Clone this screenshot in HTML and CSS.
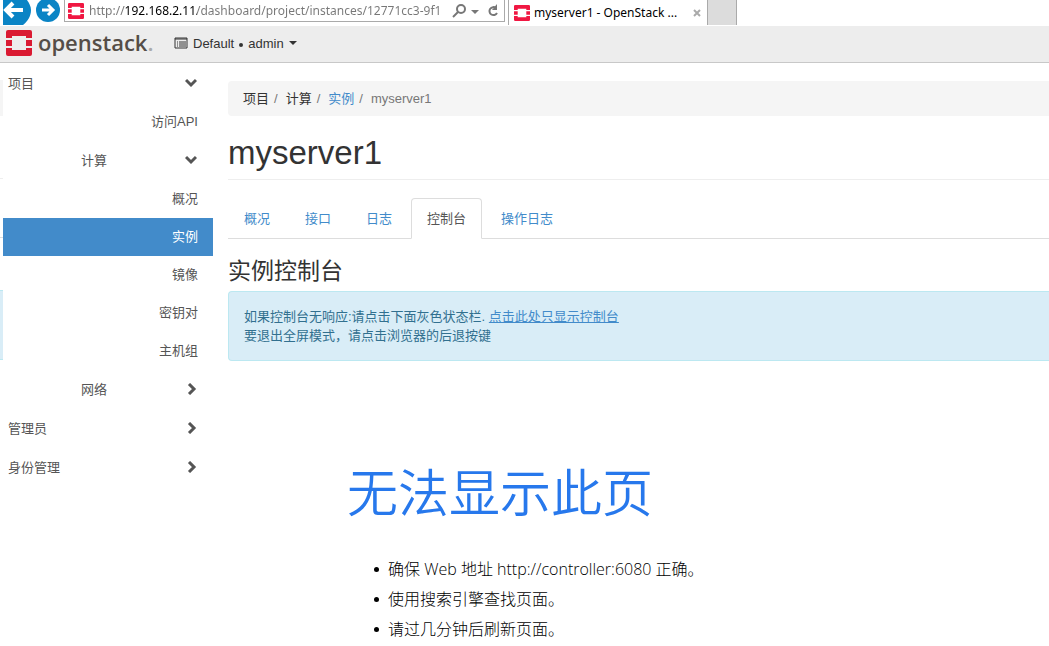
FILE: index.html
```html
<!DOCTYPE html>
<html lang="zh-CN">
<head>
    <meta charset="UTF-8">
    <meta name="viewport" content="width=device-width, initial-scale=1.0">
    <title>myserver1 - OpenStack Dashboard</title>
    <link rel="stylesheet" href="styles.css">
</head>
<body>
    <svg class="sprite" aria-hidden="true">
        <symbol id="mark" viewBox="0 0 26 26">
            <path d="M2 0h22a2 2 0 0 1 2 2v6h-6V6H6v2H0V2a2 2 0 0 1 2-2zM0 10h6v6H0zM20 10h6v6h-6zM0 18h6v2h14v-2h6v6a2 2 0 0 1-2 2H2a2 2 0 0 1-2-2z"/>
        </symbol>
        <symbol id="down" viewBox="0 0 12 12">
            <path d="M1 3l5 5 5-5" fill="none" stroke="currentColor" stroke-width="3"/>
        </symbol>
        <symbol id="right" viewBox="0 0 12 12">
            <path d="M4 1l5 5-5 5" fill="none" stroke="currentColor" stroke-width="3"/>
        </symbol>
    </svg>

    <div class="browser">
        <button class="back" aria-label="后退">
            <svg width="31" height="25" viewBox="0 0 31 25"><path d="M3 0h24c2 3 4 6 4 10 0 6-3 11-8 15H3z" fill="#0a84c5"/><path d="M23 10H6M13 3l-7 7 7 7" fill="none" stroke="#fff" stroke-width="4"/></svg>
        </button>
        <button class="forward" aria-label="前进">
            <svg width="26" height="25" viewBox="0 0 26 25"><circle cx="13" cy="10" r="12" fill="#0a84c5"/><path d="M7 10h11M13 5l5 5-5 5" fill="none" stroke="#fff" stroke-width="3"/></svg>
        </button>
        <div class="address">
            <svg class="favicon"><use href="#mark"/></svg>
            <input class="url" type="text" aria-label="地址" value="http://192.168.2.11/dashboard/project/instances/12771cc3-9f1">
            <button aria-label="搜索">
                <svg width="14" height="16" viewBox="0 0 14 16"><circle cx="9" cy="6" r="4" fill="none" stroke="#777" stroke-width="2"/><path d="M6 9l-5 5" stroke="#777" stroke-width="2"/></svg>
            </button>
            <button aria-label="历史记录">
                <svg width="8" height="16" viewBox="0 0 8 16"><path d="M0 7h8l-4 4z" fill="#777"/></svg>
            </button>
            <button class="refresh" aria-label="刷新">
                <svg width="12" height="16" viewBox="0 0 12 16"><path d="M9 5a4 4 0 1 0 1 5" fill="none" stroke="#777" stroke-width="2"/><path d="M10 1v6H5z" fill="#777"/></svg>
            </button>
        </div>
        <div class="browser-tab">
            <svg class="favicon"><use href="#mark"/></svg>
            <span>myserver1 - OpenStack ...</span>
            <button aria-label="关闭">
                <svg width="8" height="8" viewBox="0 0 8 8"><path d="M1 1l6 6M7 1l-6 6" stroke="#aaa" stroke-width="2"/></svg>
            </button>
        </div>
        <button class="new-tab" aria-label="新建标签页"></button>
    </div>

    <header class="navbar">
        <a class="brand" href="#">
            <svg><use href="#mark"/></svg>
            <span>openstack<small>.</small></span>
        </a>
        <button class="context">
            <svg width="14" height="12" viewBox="0 0 14 12"><path d="M1 1h12v10H1z" fill="none" stroke="#333" stroke-width="1"/><path d="M1 2h12M3 5h1M5 5h7M3 7h1M5 7h7M3 9h1M5 9h7" stroke="#333"/></svg>
            <span>Default</span>
            <i class="dot"></i>
            <span>admin</span>
            <i class="caret"></i>
        </button>
    </header>

    <div class="layout">
        <div class="edge">
            <div class="edge-crumb"></div>
            <div class="edge-title"></div>
            <div class="edge-tabs"></div>
            <div class="edge-alert"></div>
        </div>
        <nav class="sidebar">
            <a class="group" href="#">项目 <svg><use href="#down"/></svg></a>
            <a class="leaf" href="#">访问API</a>
            <a class="group sub" href="#">计算 <svg><use href="#down"/></svg></a>
            <a class="leaf" href="#">概况</a>
            <a class="leaf active" href="#">实例</a>
            <a class="leaf" href="#">镜像</a>
            <a class="leaf" href="#">密钥对</a>
            <a class="leaf" href="#">主机组</a>
            <a class="group sub" href="#">网络 <svg><use href="#right"/></svg></a>
            <a class="group" href="#">管理员 <svg><use href="#right"/></svg></a>
            <a class="group" href="#">身份管理 <svg><use href="#right"/></svg></a>
        </nav>

        <main class="content">
            <ol class="breadcrumb">
                <li>项目</li>
                <li>计算</li>
                <li><a href="#">实例</a></li>
                <li class="current">myserver1</li>
            </ol>
            <h1>myserver1</h1>
            <ul class="tabs">
                <li><a href="#">概况</a></li>
                <li><a href="#">接口</a></li>
                <li><a href="#">日志</a></li>
                <li><a class="active" href="#">控制台</a></li>
                <li><a href="#">操作日志</a></li>
            </ul>
            <h3>实例控制台</h3>
            <p class="alert">如果控制台无响应:请点击下面灰色状态栏. <a href="#">点击此处只显示控制台</a><br>要退出全屏模式，请点击浏览器的后退按键</p>
            <section class="console">
                <h2>无法显示此页</h2>
                <ul>
                    <li>确保 Web 地址 http://controller:6080 正确。</li>
                    <li>使用搜索引擎查找页面。</li>
                    <li>请过几分钟后刷新页面。</li>
                </ul>
            </section>
        </main>
    </div>
</body>
</html>
```
FILE: styles.css
```css
* {
    box-sizing: border-box;
}

body {
    margin: 0;
    background-color: #fff;
    color: #333;
    font-family: "Liberation Sans", "Noto Sans CJK SC", sans-serif;
    font-size: 13px;
    line-height: 19px;
    overflow: hidden;
}

a {
    color: #428bca;
    text-decoration: none;
}

button {
    display: flex;
    align-items: center;
    padding: 0;
    border: none;
    background: none;
    color: inherit;
    font: inherit;
    cursor: pointer;
}

h1, h2, h3, p, ul, ol {
    margin: 0;
    padding: 0;
    font-weight: normal;
}

ul, ol {
    list-style: none;
}

.sprite {
    display: none;
}

/* browser bar */
.browser {
    display: flex;
    height: 26px;
    padding-bottom: 1px;
    font-family: "Noto Sans", "Noto Sans CJK SC", sans-serif;
    font-size: 12px;
}

.forward {
    margin: 0 3px 0 4px;
}

.address {
    display: flex;
    align-items: center;
    gap: 5px;
    width: 441px;
    height: 22px;
    padding: 0 5px 0 3px;
    border: 1px solid #aaa;
    border-top: none;
}

.favicon {
    flex: none;
    width: 16px;
    height: 16px;
    fill: #f01742;
}

.url {
    flex: 1;
    min-width: 0;
    padding: 0;
    border: none;
    outline: none;
    font: inherit;
    color: #777;
    /* host name is darker than the rest of the address */
    background: linear-gradient(to right, #777 36px, #000 36px, #000 108px, #777 108px);
    -webkit-background-clip: text;
    background-clip: text;
    -webkit-text-fill-color: transparent;
}

.refresh {
    margin-left: 3px;
}

.browser-tab {
    display: flex;
    align-items: center;
    gap: 4px;
    width: 200px;
    margin-left: 3px;
    padding: 0 6px 0 5px;
    border: solid #aaa;
    border-width: 0 1px;
    color: #000;
    white-space: nowrap;
}

.browser-tab button {
    margin-left: auto;
}

.new-tab {
    width: 29px;
    border-right: 1px solid #aaa;
    background-color: #dcdcdc;
}

/* top navigation */
.navbar {
    display: flex;
    align-items: center;
    height: 37px;
    padding: 0 6px 2px;
    border-bottom: 1px solid #c8c8c8;
    background-color: #ededed;
}

.brand {
    display: flex;
    align-items: center;
    gap: 6px;
    width: 168px;
    color: #554d47;
    font-family: "Open Sans", sans-serif;
    font-size: 22px;
    font-weight: 600;
    line-height: 26px;
}

.brand svg {
    width: 26px;
    height: 26px;
    fill: #da1a32;
}

.brand span {
    padding-bottom: 3px;
}

.brand small {
    color: #aaa;
    font-size: 22px;
}

.context {
    gap: 5px;
}

.dot {
    width: 4px;
    height: 4px;
    margin-top: 4px;
    border-radius: 50%;
    background-color: #333;
}

.caret {
    border: 4px solid transparent;
    border-top-color: #333;
    border-bottom: none;
}

/* page */
.layout {
    display: flex;
}

.edge {
    width: 3px;
}

.edge-crumb {
    height: 36px;
    margin-top: 17px;
    background-color: #f5f5f5;
}

.edge-title {
    height: 63px;
    border-bottom: 1px solid #eee;
}

.edge-tabs {
    height: 59px;
    border-bottom: 1px solid #ddd;
}

.edge-alert {
    height: 70px;
    margin-top: 52px;
    border: solid #bce8f1;
    border-width: 1px 0;
    background-color: #d9edf7;
}

.sidebar {
    width: 210px;
    padding-top: 1px;
}

.sidebar a {
    display: flex;
    align-items: center;
    color: #555;
}

.group {
    justify-content: space-between;
    height: 39px;
    padding: 0 16px 1px 5px;
}

.group svg {
    width: 12px;
    height: 12px;
}

.sub {
    padding-left: 78px;
}

.leaf {
    justify-content: flex-end;
    height: 38px;
    padding: 0 15px 1px;
}

.sidebar .active {
    background-color: #428bca;
    color: #fff;
}

.content {
    flex: 1;
    padding: 18px 0 0 15px;
}

.breadcrumb {
    display: flex;
    padding: 8px 15px;
    border-radius: 4px 0 0 4px;
    background-color: #f5f5f5;
}

.breadcrumb li + li::before {
    content: "/";
    padding: 0 8px 0 5px;
    color: #777;
}

.breadcrumb .current {
    color: #777;
}

h1 {
    padding: 17px 0 7px;
    border-bottom: 1px solid #eee;
    font-size: 33px;
    line-height: 39px;
}

.tabs {
    display: flex;
    gap: 3px;
    margin-top: 18px;
    border-bottom: 1px solid #ddd;
}

.tabs a {
    display: block;
    margin-bottom: -1px;
    padding: 10px 15px;
    border: 1px solid transparent;
    border-radius: 4px 4px 0 0;
}

.tabs .active {
    border-color: #ddd;
    border-bottom-color: #fff;
    background-color: #fff;
    color: #555;
}

h3 {
    margin: 19px 0 7px;
    font-size: 23px;
    line-height: 26px;
}

.alert {
    padding: 15px;
    border: 1px solid #bce8f1;
    border-right: none;
    border-radius: 4px 0 0 4px;
    background-color: #d9edf7;
    color: #31708f;
}

.alert a {
    text-decoration: underline;
}

.console {
    padding: 98px 0 0 119px;
    color: #000;
    font-family: "Open Sans", "Noto Sans CJK SC", sans-serif;
    font-size: 16px;
    line-height: 30px;
}

.console h2 {
    color: #2778ec;
    font-size: 51px;
    font-weight: 350;
    line-height: 66px;
}

.console ul {
    margin-top: 29px;
    padding-left: 27px;
    font-weight: 300;
}

.console li {
    display: flex;
    align-items: center;
    gap: 9px;
}

.console li::before {
    content: "";
    width: 5px;
    height: 5px;
    border-radius: 50%;
    background-color: #000;
}
```
